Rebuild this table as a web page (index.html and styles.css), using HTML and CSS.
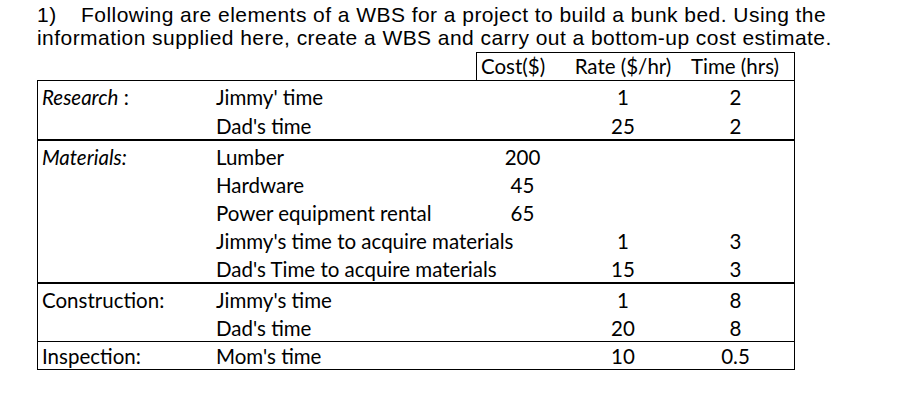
FILE: index.html
```html
<!DOCTYPE html>
<html>
<head>
<meta charset="utf-8">
<link rel="stylesheet" href="styles.css">
</head>
<body>
<div class="page">
  <p class="question"><span class="num">1)</span>Following are elements of a WBS for a project to build a bunk bed. Using the<br>information supplied here, create a WBS and carry out a bottom-up cost estimate.</p>
  <div class="sheet">
    <div class="head">
      <div class="hcell hcost">Cost($)</div>
      <div class="hcell">Rate ($/hr)</div>
      <div class="hcell">Time (hrs)</div>
    </div>
    <div class="table">
      <div class="section research thick">
        <div class="cat"><i>Research</i> :</div><div class="item">Jimmy' time</div><div class="num-c"></div><div class="num-c">1</div><div class="num-c">2</div>
        <div class="cat"></div><div class="item">Dad's time</div><div class="num-c"></div><div class="num-c">25</div><div class="num-c">2</div>
      </div>
      <div class="section materials thick">
        <div class="cat"><i>Materials:</i></div><div class="item">Lumber</div><div class="num-c">200</div><div class="num-c"></div><div class="num-c"></div>
        <div class="cat"></div><div class="item">Hardware</div><div class="num-c">45</div><div class="num-c"></div><div class="num-c"></div>
        <div class="cat"></div><div class="item">Power equipment rental</div><div class="num-c">65</div><div class="num-c"></div><div class="num-c"></div>
        <div class="cat"></div><div class="item">Jimmy's time to acquire materials</div><div class="num-c"></div><div class="num-c">1</div><div class="num-c">3</div>
        <div class="cat"></div><div class="item">Dad's Time to acquire materials</div><div class="num-c"></div><div class="num-c">15</div><div class="num-c">3</div>
      </div>
      <div class="section construction thin">
        <div class="cat">Construction:</div><div class="item">Jimmy's time</div><div class="num-c"></div><div class="num-c">1</div><div class="num-c">8</div>
        <div class="cat"></div><div class="item">Dad's time</div><div class="num-c"></div><div class="num-c">20</div><div class="num-c">8</div>
      </div>
      <div class="section inspection">
        <div class="cat">Inspection:</div><div class="item">Mom's time</div><div class="num-c"></div><div class="num-c">10</div><div class="num-c">0.5</div>
      </div>
    </div>
  </div>
</div>
</body>
</html>
```
FILE: styles.css
```css
html, body {
  margin: 0;
  padding: 0;
  background: #ffffff;
}

.page {
  padding: 3px 0 0 37px;
  width: 860px;
}

.question {
  margin: 0;
  font-family: "Liberation Sans", Arial, sans-serif;
  font-size: 21px;
  line-height: 23px;
  letter-spacing: 0.45px;
  color: #000;
  white-space: nowrap;
}

.question .num {
  display: inline-block;
  width: 44px;
}

.sheet {
  margin-top: 3px;
  width: 758px;
  font-family: Lato, "Noto Sans", sans-serif;
  font-size: 20.5px;
  color: #000;
}

.head {
  margin-left: 439px;
  width: 319px;
  box-sizing: border-box;
  border: 1px solid #000;
  border-bottom: none;
  display: grid;
  grid-template-columns: 92px 108px 116px;
  height: 28px;
}

.hcell {
  line-height: 27px;
  text-align: center;
  white-space: nowrap;
}

.hcell.hcost {
  text-align: left;
  padding-left: 4px;
}

.table {
  border: 1px solid #000;
  box-sizing: border-box;
  width: 758px;
}

.section {
  display: grid;
  grid-template-columns: 174px 264px 93px 108px 117px;
  grid-auto-rows: 28px;
  line-height: 26px;
}

.section > div {
  padding-top: 2px;
}

.section.thick {
  border-bottom: 2px solid #000;
}

.section.thin {
  border-bottom: 1px solid #000;
}

.research {
  grid-auto-rows: 29px;
  line-height: 25px;
}

.research > div {
  padding-top: 4px;
}

.materials {
  padding-top: 1px;
}

.construction {
  padding-top: 1px;
}

.inspection {
  grid-auto-rows: 27px;
  line-height: 25px;
}

.cat {
  padding-left: 4px;
  white-space: nowrap;
}

.item {
  padding-left: 4px;
  white-space: nowrap;
}

.num-c {
  text-align: center;
  white-space: nowrap;
}
```
